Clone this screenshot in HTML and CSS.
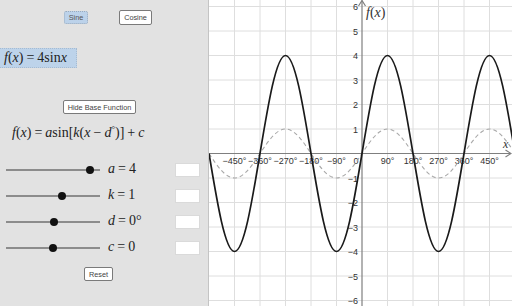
FILE: index.html
```html
<!DOCTYPE html>
<html>
<head>
<meta charset="utf-8">
<link rel="stylesheet" href="styles.css">
</head>
<body>
<div class="left">
  <div class="toggles">
    <div class="btn btn-sel">Sine</div>
    <div class="btn btn-cos">Cosine</div>
  </div>
  <div class="fbox"><span class="m"><i>f</i>(<i>x</i>)</span><span class="op">=</span><span class="m">4sin<i>x</i></span></div>
  <div class="btn btn-hide">Hide Base Function</div>
  <div class="main-formula"><i>f</i>(<i>x</i>)<span class="op">=</span><i>a</i>sin[<i>k</i>(<i>x</i><span class="op">−</span><i>d</i><sup>°</sup>)]<span class="op">+</span><i>c</i></div>
  <div class="sliders">
    <div class="srow">
      <div class="track"><span class="knob" style="left:89.5%"></span></div>
      <div class="slabel"><i>a</i><span class="op">=</span>4</div>
      <div class="inbox"></div>
    </div>
    <div class="srow">
      <div class="track"><span class="knob" style="left:59.7%"></span></div>
      <div class="slabel"><i>k</i><span class="op">=</span>1</div>
      <div class="inbox"></div>
    </div>
    <div class="srow">
      <div class="track"><span class="knob" style="left:51.5%"></span></div>
      <div class="slabel"><i>d</i><span class="op">=</span>0°</div>
      <div class="inbox"></div>
    </div>
    <div class="srow">
      <div class="track"><span class="knob" style="left:50%"></span></div>
      <div class="slabel"><i>c</i><span class="op">=</span>0</div>
      <div class="inbox"></div>
    </div>
  </div>
  <div class="btn btn-reset">Reset</div>
</div>
<div class="graph">
  <svg width="303" height="306" viewBox="0 0 303 306">
    <g transform="translate(153,153.5)">
      <g class="grid">
        <line x1="-127.5" y1="-154" x2="-127.5" y2="153"/>
        <line x1="-102" y1="-154" x2="-102" y2="153"/>
        <line x1="-76.5" y1="-154" x2="-76.5" y2="153"/>
        <line x1="-51" y1="-154" x2="-51" y2="153"/>
        <line x1="-25.5" y1="-154" x2="-25.5" y2="153"/>
        <line x1="25.5" y1="-154" x2="25.5" y2="153"/>
        <line x1="51" y1="-154" x2="51" y2="153"/>
        <line x1="76.5" y1="-154" x2="76.5" y2="153"/>
        <line x1="102" y1="-154" x2="102" y2="153"/>
        <line x1="127.5" y1="-154" x2="127.5" y2="153"/>
        <line x1="-153" y1="-147" x2="150" y2="-147"/>
        <line x1="-153" y1="-122.5" x2="150" y2="-122.5"/>
        <line x1="-153" y1="-98" x2="150" y2="-98"/>
        <line x1="-153" y1="-73.5" x2="150" y2="-73.5"/>
        <line x1="-153" y1="-49" x2="150" y2="-49"/>
        <line x1="-153" y1="-24.5" x2="150" y2="-24.5"/>
        <line x1="-153" y1="24.5" x2="150" y2="24.5"/>
        <line x1="-153" y1="49" x2="150" y2="49"/>
        <line x1="-153" y1="73.5" x2="150" y2="73.5"/>
        <line x1="-153" y1="98" x2="150" y2="98"/>
        <line x1="-153" y1="122.5" x2="150" y2="122.5"/>
        <line x1="-153" y1="147" x2="150" y2="147"/>
      </g>
      <g class="axis">
        <line x1="-153" y1="0" x2="149" y2="0"/>
        <polyline points="143.5,-3.5 149,0 143.5,3.5"/>
        <line x1="0" y1="153" x2="0" y2="-153"/>
        <polyline points="-3.5,-147.5 0,-153 3.5,-147.5"/>
      </g>
      <g class="xl">
        <text x="-127.5" y="10">−450°</text>
        <text x="-102" y="10">−360°</text>
        <text x="-76.5" y="10">−270°</text>
        <text x="-51" y="10">−180°</text>
        <text x="-25.5" y="10">−90°</text>
        <text x="-6" y="10">0</text>
        <text x="25.5" y="10">90°</text>
        <text x="51" y="10">180°</text>
        <text x="76.5" y="10">270°</text>
        <text x="102" y="10">360°</text>
        <text x="127.5" y="10">450°</text>
      </g>
      <g class="yl">
        <text x="-4" y="-143.5">6</text>
        <text x="-4" y="-119">5</text>
        <text x="-4" y="-94.5">4</text>
        <text x="-4" y="-70">3</text>
        <text x="-4" y="-45.5">2</text>
        <text x="-4" y="-21">1</text>
        <text x="-4" y="28">−1</text>
        <text x="-4" y="52.5">−2</text>
        <text x="-4" y="77">−3</text>
        <text x="-4" y="101.5">−4</text>
        <text x="-4" y="126">−5</text>
        <text x="-4" y="150.5">−6</text>
      </g>
      <text class="axlab" x="141" y="-6">x</text>
      <text class="fxlab" x="4" y="-136.5"><tspan class="it">f</tspan>(<tspan class="it">x</tspan>)</text>
      <path class="base" d="M -153,0
        c 8.317,12.55 16.272,24.5 25.5,24.5 c 9.228,0 17.183,-11.95 25.5,-24.5 c 8.317,-12.55 16.272,-24.5 25.5,-24.5 c 9.228,0 17.183,11.95 25.5,24.5
        c 8.317,12.55 16.272,24.5 25.5,24.5 c 9.228,0 17.183,-11.95 25.5,-24.5 c 8.317,-12.55 16.272,-24.5 25.5,-24.5 c 9.228,0 17.183,11.95 25.5,24.5
        c 8.317,12.55 16.272,24.5 25.5,24.5 c 9.228,0 17.183,-11.95 25.5,-24.5 c 8.317,-12.55 16.272,-24.5 25.5,-24.5 c 9.228,0 17.183,11.95 25.5,24.5"/>
      <path class="main" d="M -153,0
        c 8.317,50.2 16.272,98 25.5,98 c 9.228,0 17.183,-47.8 25.5,-98 c 8.317,-50.2 16.272,-98 25.5,-98 c 9.228,0 17.183,47.8 25.5,98
        c 8.317,50.2 16.272,98 25.5,98 c 9.228,0 17.183,-47.8 25.5,-98 c 8.317,-50.2 16.272,-98 25.5,-98 c 9.228,0 17.183,47.8 25.5,98
        c 8.317,50.2 16.272,98 25.5,98 c 9.228,0 17.183,-47.8 25.5,-98 c 8.317,-50.2 16.272,-98 25.5,-98 c 9.228,0 17.183,47.8 25.5,98"/>
    </g>
  </svg>
</div>
</body>
</html>
```
FILE: styles.css
```css
html, body {
  margin: 0;
  padding: 0;
}
body {
  width: 512px;
  height: 306px;
  overflow: hidden;
  display: flex;
  background: #ffffff;
  font-family: "Liberation Sans", Arial, sans-serif;
}
.left {
  width: 208px;
  height: 306px;
  flex: none;
  background: #e2e2e2;
  border-right: 1px solid #c4c4c4;
  display: flex;
  flex-direction: column;
  align-items: flex-start;
  color: #222;
}
.btn {
  box-sizing: border-box;
  font-size: 7.3px;
  color: #444;
  display: flex;
  align-items: center;
  justify-content: center;
  border-radius: 2px;
}
.toggles {
  margin-top: 10px;
  height: 15px;
  display: flex;
  align-items: center;
}
.btn-sel {
  margin-left: 64px;
  width: 24px;
  height: 13px;
  background: #bcd2ea;
  border: 1px dotted #9aabbd;
  color: #555;
}
.btn-cos {
  margin-left: 31px;
  width: 33px;
  height: 15px;
  background: #ffffff;
  border: 1px solid #7a7a7a;
}
.fbox {
  margin-top: 23px;
  width: 77px;
  height: 20px;
  box-sizing: border-box;
  background: #bdd3ea;
  border-top: 1px dotted #a6bbd1;
  border-bottom: 1px dotted #a6bbd1;
  border-right: 1px dotted #a6bbd1;
  font-family: "Liberation Serif", "Times New Roman", serif;
  font-size: 14px;
  line-height: 18px;
  padding-left: 4px;
  white-space: nowrap;
  color: #222;
}
.op {
  margin: 0 3px;
}
.btn-hide {
  margin-top: 32px;
  margin-left: 63px;
  width: 73px;
  height: 14px;
  background: #ffffff;
  border: 1px solid #7a7a7a;
}
.main-formula {
  margin-top: 9px;
  margin-left: 12px;
  font-family: "Liberation Serif", "Times New Roman", serif;
  font-size: 14px;
  line-height: 20px;
  white-space: nowrap;
  color: #222;
}
.main-formula sup {
  font-size: 9px;
  vertical-align: 5px;
  line-height: 0;
}
.sliders {
  margin-top: 14px;
  width: 208px;
  display: flex;
  flex-direction: column;
}
.srow {
  height: 26px;
  display: flex;
  align-items: center;
}
.track {
  position: relative;
  margin-left: 6px;
  width: 94px;
  height: 2px;
  background: #8c8c8c;
  flex: none;
}
.knob {
  position: absolute;
  top: 50%;
  width: 8px;
  height: 8px;
  margin-left: -4px;
  margin-top: -4px;
  border-radius: 50%;
  background: #111;
}
.slabel {
  flex: 1;
  margin-left: 8px;
  padding-bottom: 3px;
  font-family: "Liberation Serif", "Times New Roman", serif;
  font-size: 14px;
  line-height: 16px;
  color: #222;
  white-space: nowrap;
}
.inbox {
  width: 25px;
  height: 14px;
  box-sizing: border-box;
  background: #ffffff;
  border: 1px solid #dadada;
  margin-right: 8px;
  flex: none;
}
.btn-reset {
  margin-top: 6px;
  margin-left: 84px;
  width: 29px;
  height: 14px;
  background: #ffffff;
  border: 1px solid #7a7a7a;
}
.graph {
  flex: none;
  width: 303px;
  height: 306px;
}
.graph svg {
  display: block;
}
.grid line {
  stroke: #dedede;
  stroke-width: 1;
}
.axis line, .axis polyline {
  stroke: #7f7f7f;
  stroke-width: 1.2;
  fill: none;
}
.xl text {
  font-family: "Liberation Sans", Arial, sans-serif;
  font-size: 9px;
  fill: #333;
  text-anchor: middle;
}
.yl text {
  font-family: "Liberation Sans", Arial, sans-serif;
  font-size: 9px;
  fill: #333;
  text-anchor: end;
}
.axlab {
  font-family: "Liberation Serif", "Times New Roman", serif;
  font-style: italic;
  font-size: 12px;
  fill: #333;
}
.fxlab {
  font-family: "Liberation Serif", "Times New Roman", serif;
  font-size: 14px;
  fill: #333;
}
.fxlab .it {
  font-style: italic;
}
.base {
  fill: none;
  stroke: #a8a8a8;
  stroke-width: 1.1;
  stroke-dasharray: 4 3;
}
.main {
  fill: none;
  stroke: #1a1a1a;
  stroke-width: 1.7;
}
```
